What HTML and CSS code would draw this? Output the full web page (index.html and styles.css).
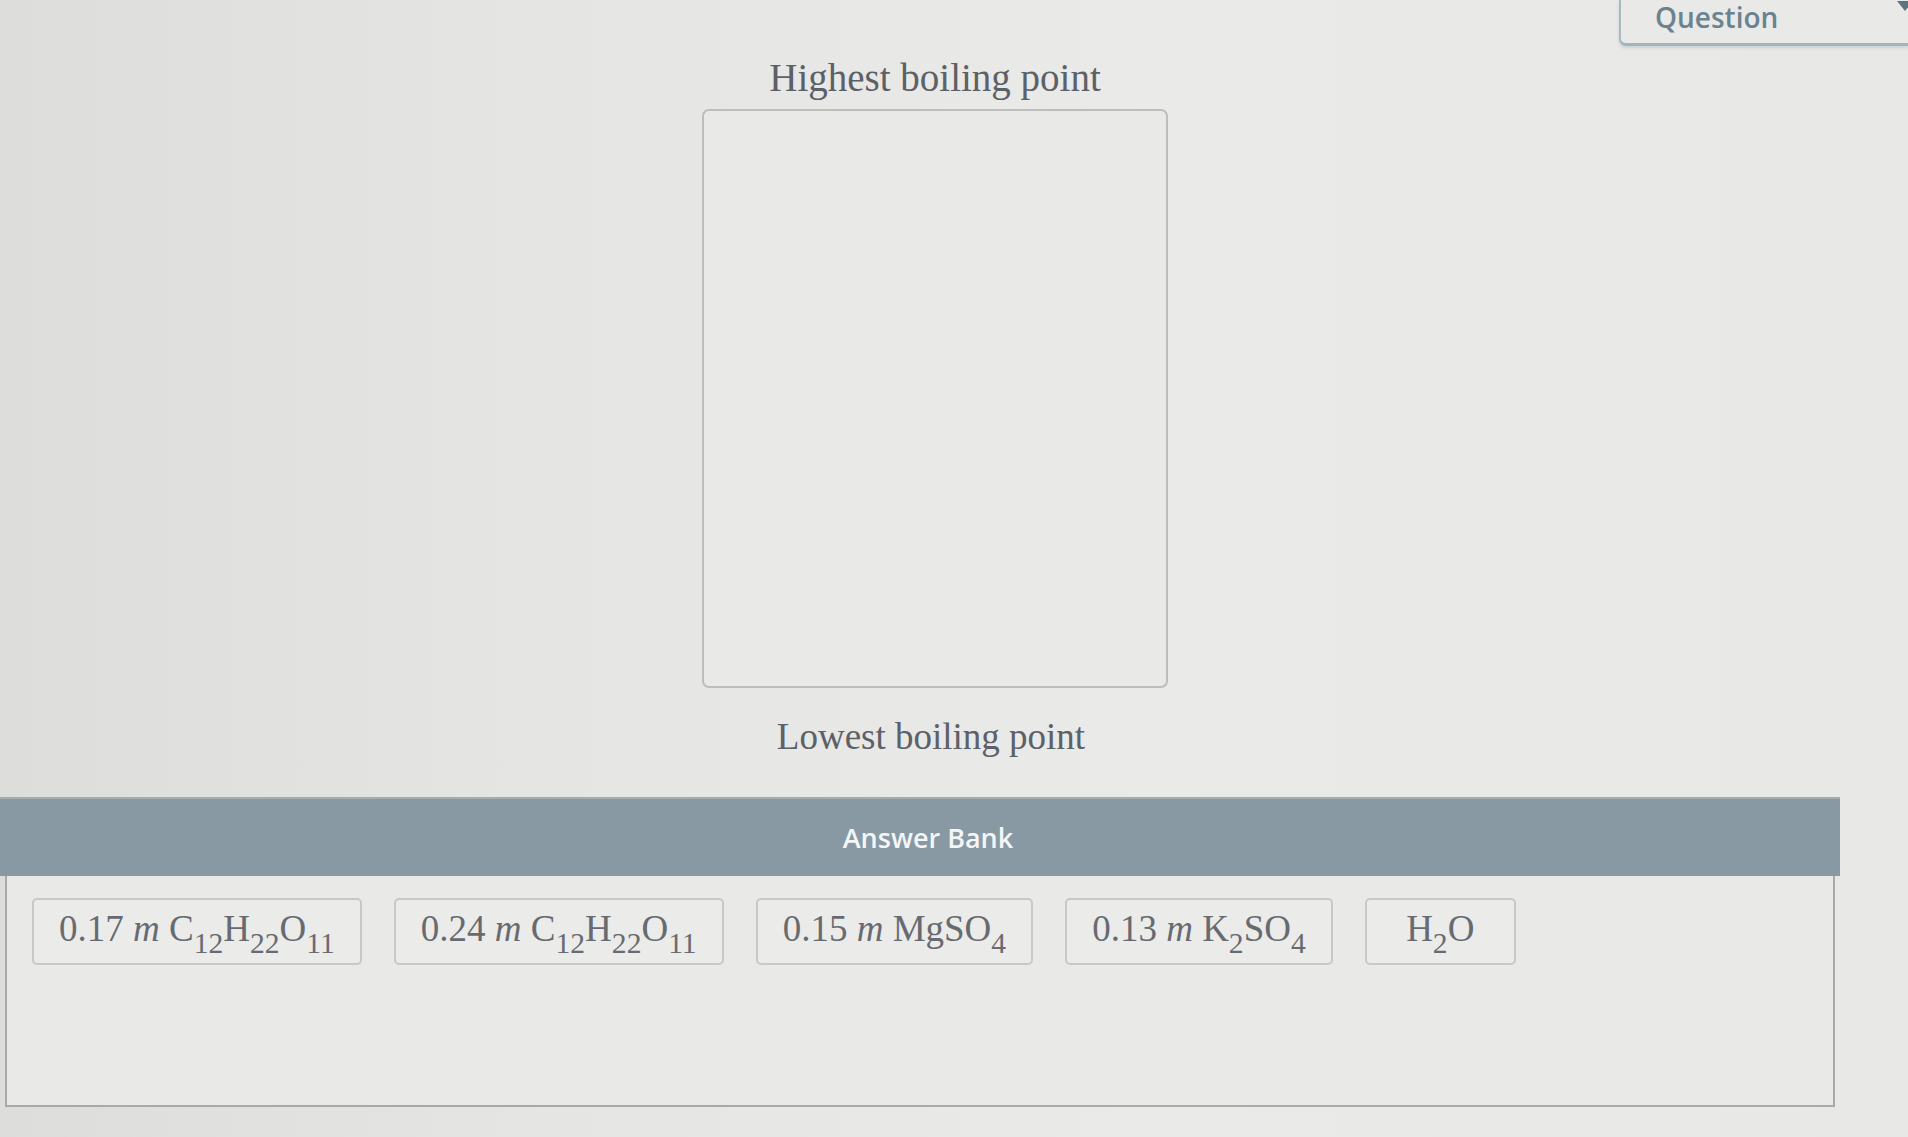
FILE: index.html
```html
<!DOCTYPE html>
<html lang="en">
<head>
<meta charset="utf-8">
<title>Rank by boiling point</title>
<link rel="stylesheet" href="styles.css">
</head>
<body>
  <header class="topbar">
    <div class="question-tab">
      <span class="question-label">Question</span>
      <svg class="caret" width="18" height="14" viewBox="0 0 18 14" aria-hidden="true">
        <path d="M1 1 L17 1 L9 11 Z" fill="#5a7482"/>
      </svg>
    </div>
  </header>

  <main class="workspace">
    <section class="sorter">
      <div class="rank-label">Highest boiling point</div>
      <div class="drop-zone"></div>
      <div class="rank-label rank-label-low">Lowest boiling point</div>
    </section>

    <section class="answer-bank">
      <div class="bank-title">Answer Bank</div>
      <div class="bank-items">
        <div class="chip"><span class="formula">0.17 <i>m</i> C<sub>12</sub>H<sub>22</sub>O<sub>11</sub></span></div>
        <div class="chip"><span class="formula">0.24 <i>m</i> C<sub>12</sub>H<sub>22</sub>O<sub>11</sub></span></div>
        <div class="chip"><span class="formula">0.15 <i>m</i> MgSO<sub>4</sub></span></div>
        <div class="chip"><span class="formula">0.13 <i>m</i> K<sub>2</sub>SO<sub>4</sub></span></div>
        <div class="chip chip-narrow"><span class="formula">H<sub>2</sub>O</span></div>
      </div>
    </section>
  </main>
</body>
</html>
```

FILE: styles.css
```css
html, body {
  margin: 0;
  padding: 0;
}

body {
  width: 1908px;
  height: 1137px;
  overflow: hidden;
  background: linear-gradient(90deg, #dddddb 0%, #e5e5e3 28%, #eaeae8 60%, #e8e8e6 100%);
  font-family: "Liberation Serif", "Times New Roman", serif;
  color: #5d6167;
}

/* top strip with the question selector */
.topbar {
  height: 46px;
  display: flex;
  justify-content: flex-end;
}

.question-tab {
  width: 289px;
  height: 46px;
  box-sizing: border-box;
  border-left: 2px solid #a7bac2;
  border-bottom: 3px solid #a1b5be;
  border-bottom-left-radius: 7px;
  box-shadow: 0 2px 3px rgba(120, 140, 150, 0.25);
  background: #e9eae8;
  display: flex;
  align-items: flex-start;
  padding-left: 34px;
  position: relative;
}

.question-label {
  font-family: "Open Sans", "Liberation Sans", sans-serif;
  font-weight: 600;
  font-size: 28px;
  line-height: 34px;
  color: #6a8391;
}

.caret {
  position: absolute;
  right: -6px;
  top: 0;
}

.workspace {
  width: 1840px;
}

/* ranking column */
.sorter {
  display: flex;
  flex-direction: column;
  align-items: center;
  padding-left: 30px;
  padding-top: 10px;
}

.rank-label {
  font-size: 39px;
  line-height: 44px;
  color: #5c6067;
}

.rank-label-low {
  font-size: 37px;
  margin-top: 27px;
  margin-right: 8px;
}

.drop-zone {
  margin-top: 9px;
  width: 466px;
  height: 579px;
  box-sizing: border-box;
  border: 2px solid #bdbdbc;
  border-radius: 7px;
  background: #e9e9e7;
}

/* answer bank */
.answer-bank {
  margin-top: 38px;
}

.bank-title {
  height: 79px;
  box-sizing: border-box;
  border-top: 2px solid #a5acb0;
  background: #8899a4;
  color: #f4f6f6;
  font-family: "Open Sans", "Liberation Sans", sans-serif;
  font-weight: 600;
  font-size: 27px;
  display: flex;
  align-items: center;
  justify-content: center;
  padding-left: 16px;
}

.bank-items {
  margin-left: 5px;
  width: 1830px;
  height: 231px;
  box-sizing: border-box;
  border: 2px solid #a9a9a8;
  border-top: none;
  padding: 22px 0 0 25px;
  display: flex;
  align-items: flex-start;
  gap: 32px;
  background: #e9e9e7;
}

.chip {
  height: 67px;
  box-sizing: border-box;
  border: 2px solid #c8c8c7;
  border-radius: 5px;
  background: #ebebe9;
  padding: 0 25px 5px;
  display: flex;
  align-items: center;
  justify-content: center;
  white-space: nowrap;
}

.formula {
  font-size: 37px;
  line-height: 40px;
  color: #676b71;
}

.formula i {
  font-style: italic;
}

.formula sub {
  font-size: 0.8em;
  line-height: 0;
  vertical-align: -0.42em;
}

.chip-narrow {
  min-width: 151px;
}
```
